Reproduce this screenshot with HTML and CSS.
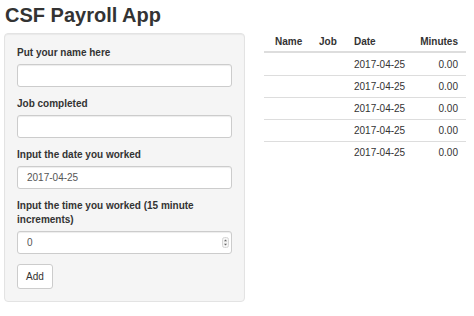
FILE: index.html
```html
<!DOCTYPE html>
<html lang="en">
<head>
    <meta charset="UTF-8">
    <title>CSF Payroll App</title>
    <link rel="stylesheet" href="styles.css">
</head>
<body>
<h2 class="app-title">CSF Payroll App</h2>

<div class="layout">
    <div class="sidebar well">
        <div class="form-group">
            <label for="name">Put your name here</label>
            <input type="text" id="name" class="form-control">
        </div>
        <div class="form-group">
            <label for="job">Job completed</label>
            <input type="text" id="job" class="form-control">
        </div>
        <div class="form-group">
            <label for="date">Input the date you worked</label>
            <input type="text" id="date" class="form-control" value="2017-04-25">
        </div>
        <div class="form-group">
            <label for="minutes">Input the time you worked (15 minute increments)</label>
            <div class="number-wrap">
                <input type="text" id="minutes" class="form-control" value="0">
                <svg class="spinner" width="7" height="11" viewBox="0 0 7 11">
                    <rect x="0.5" y="0.5" width="6" height="10" rx="2" fill="#f4f4f4" stroke="#d6d6d6"/>
                    <path d="M2 4.3 L3.5 2.5 L5 4.3 Z" fill="#666"/>
                    <path d="M2 6.7 L3.5 8.5 L5 6.7 Z" fill="#666"/>
                </svg>
            </div>
        </div>
        <button class="btn">Add</button>
    </div>

    <div class="main">
        <table class="entries">
            <thead>
                <tr>
                    <th class="col-name">Name</th>
                    <th class="col-job">Job</th>
                    <th class="col-date">Date</th>
                    <th class="col-min">Minutes</th>
                </tr>
            </thead>
            <tbody>
                <tr><td class="col-name"></td><td></td><td>2017-04-25</td><td class="num">0.00</td></tr>
                <tr><td class="col-name"></td><td></td><td>2017-04-25</td><td class="num">0.00</td></tr>
                <tr><td class="col-name"></td><td></td><td>2017-04-25</td><td class="num">0.00</td></tr>
                <tr><td class="col-name"></td><td></td><td>2017-04-25</td><td class="num">0.00</td></tr>
                <tr><td class="col-name"></td><td></td><td>2017-04-25</td><td class="num">0.00</td></tr>
            </tbody>
        </table>
    </div>
</div>
</body>
</html>
```

FILE: styles.css
```css
html {
    font-family: 'Liberation Sans', Arial, sans-serif;
}
body {
    margin: 0;
    padding: 0 4px;
    color: #333;
    font-size: 10px;
    background: #fff;
}
.app-title {
    font-size: 20px;
    font-weight: bold;
    line-height: 22px;
    margin: 4px 0 5px 1px;
    color: #333;
}
.layout {
    display: flex;
    align-items: flex-start;
}
.well {
    width: 215px;
    margin-top: 2px;
    padding: 12px;
    background-color: #f5f5f5;
    border: 1px solid #e3e3e3;
    border-radius: 4px;
    box-shadow: inset 0 1px 1px rgba(0, 0, 0, .05);
}
.form-group {
    margin-bottom: 10px;
}
.form-group label {
    display: block;
    font-weight: bold;
    line-height: 14px;
    margin-bottom: 4px;
}
.form-control {
    display: block;
    box-sizing: border-box;
    width: 100%;
    height: 23px;
    padding: 0 9px;
    font-family: inherit;
    font-size: 10px;
    color: #555;
    background: #fff;
    border: 1px solid #ccc;
    border-radius: 3px;
    box-shadow: inset 0 1px 1px rgba(0, 0, 0, .075);
}
.number-wrap {
    position: relative;
}
.spinner {
    position: absolute;
    right: 3px;
    top: 6px;
}
.btn {
    display: block;
    height: 25px;
    width: 36px;
    margin-top: 9px;
    padding: 0;
    font-family: inherit;
    font-size: 10px;
    color: #333;
    background: #fff;
    border: 1px solid #ccc;
    border-radius: 3px;
}
.main {
    margin-left: 19px;
}
.entries {
    width: 202px;
    border-collapse: collapse;
    white-space: nowrap;
}
.entries th {
    height: 20px;
    padding: 0 8px;
    text-align: left;
    font-weight: bold;
    border-bottom: 2px solid #ddd;
}
.entries td {
    height: 21px;
    padding: 0 8px;
    border-top: 1px solid #ddd;
}
.entries tbody tr:first-child td {
    border-top: 0;
    height: 22px;
}
.entries .col-name {
    width: 28px;
    padding-left: 11px;
}
.entries .col-job {
    width: 19px;
}
.entries .col-date {
    width: 52px;
}
.entries .col-min,
.entries .num {
    text-align: right;
    padding-left: 4px;
}
```
